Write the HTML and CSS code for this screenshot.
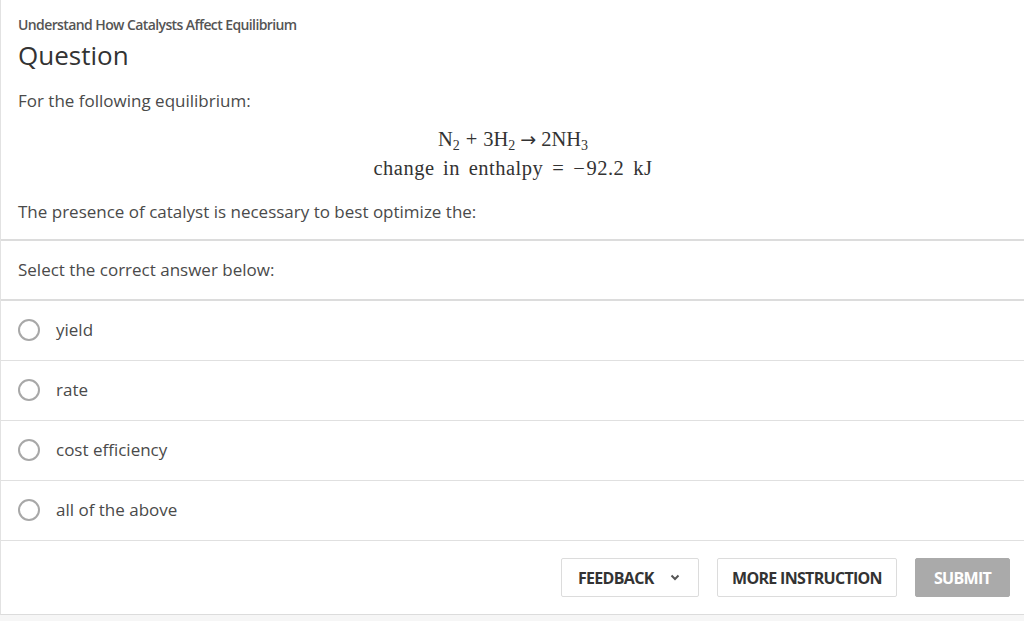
FILE: index.html
```html
<!DOCTYPE html>
<html>
<head>
<meta charset="utf-8">
<link rel="stylesheet" href="styles.css">
</head>
<body>
<div class="card">
  <div class="header">
    <div class="subtitle">Understand How Catalysts Affect Equilibrium</div>
    <h1 class="title">Question</h1>
    <p class="text intro">For the following equilibrium:</p>
    <div class="math">
      <div class="mline">N<sub>2</sub><span class="op">+</span>3H<sub>2</sub><span class="op arrow">→</span>2NH<sub>3</sub></div>
      <div class="mline wide">change in enthalpy<span class="op">=</span><span class="minus">−</span>92.2<span class="thin"></span>kJ</div>
    </div>
    <p class="text prompt">The presence of catalyst is necessary to best optimize the:</p>
  </div>
  <div class="select text">Select the correct answer below:</div>
  <ul class="options">
    <li class="option"><span class="radio"></span><span class="text">yield</span></li>
    <li class="option"><span class="radio"></span><span class="text">rate</span></li>
    <li class="option"><span class="radio"></span><span class="text">cost efficiency</span></li>
    <li class="option"><span class="radio"></span><span class="text">all of the above</span></li>
  </ul>
  <div class="footer">
    <button class="btn feedback">FEEDBACK
      <svg class="chev" width="10" height="7" viewBox="0 0 10 7"><path d="M1.5 1.5 L5 5 L8.5 1.5" fill="none" stroke="#555" stroke-width="2"/></svg>
    </button>
    <button class="btn more">MORE INSTRUCTION</button>
    <button class="btn submit">SUBMIT</button>
  </div>
</div>
</body>
</html>
```
FILE: styles.css
```css
html, body {
  margin: 0;
  padding: 0;
  background: #f6f6f6;
  font-family: "Open Sans", "Liberation Sans", sans-serif;
  color: #4a4a4a;
}
.card {
  background: #fff;
  border-left: 1px solid #e2e2e2;
  border-bottom: 1px solid #dcdcdc;
  height: 615px;
  box-sizing: border-box;
  display: flex;
  flex-direction: column;
}
.header {
  padding: 16px 18px 15px 17px;
  border-bottom: 2px solid #dcdcdc;
}
.subtitle {
  font-size: 14px;
  line-height: 18px;
  font-weight: 600;
  letter-spacing: -0.6px;
  color: #555;
}
.title {
  margin: 5px 0 0;
  font-size: 26px;
  line-height: 32px;
  font-weight: 400;
  color: #333;
}
.text {
  font-size: 17px;
  line-height: 24px;
  color: #4a4a4a;
}
.intro {
  margin: 18px 0 0;
}
.math {
  margin-top: 12px;
  text-align: center;
  font-family: "Liberation Serif", "DejaVu Serif", serif;
  font-size: 20.5px;
  line-height: 29px;
  color: #333;
  padding-left: 2px;
}
.math sub {
  font-size: 14px;
  vertical-align: -4px;
  line-height: 0;
}
.math .op {
  padding: 0 6px;
}
.math .arrow {
  font-family: "DejaVu Sans", sans-serif;
  font-size: 19px;
  padding: 0 5px;
}
.math .wide {
  letter-spacing: 0.5px;
  word-spacing: 3px;
}
.math .wide .op {
  padding: 0 9px;
}
.math .minus {
  padding-right: 1px;
}
.math .thin {
  display: inline-block;
  width: 9px;
}
.prompt {
  margin: 17px 0 0;
}
.select {
  padding: 17px 18px 17px 17px;
  border-bottom: 2px solid #dcdcdc;
}
.options {
  list-style: none;
  margin: 0;
  padding: 0;
}
.option {
  display: flex;
  align-items: center;
  padding: 17px 17px 18px 17px;
  border-bottom: 1px solid #e0e0e0;
}
.radio {
  width: 18px;
  height: 18px;
  border: 2px solid #a8a8a8;
  border-radius: 50%;
  margin-right: 16px;
  flex: none;
}
.footer {
  display: flex;
  justify-content: flex-end;
  gap: 18px;
  padding: 17px 14px 0 0;
}
.btn {
  height: 39px;
  box-sizing: border-box;
  padding: 0 16px;
  border: 1px solid #dcdcdc;
  background: #fff;
  border-radius: 2px;
  font-family: "Open Sans", "Liberation Sans", sans-serif;
  font-weight: 700;
  font-size: 16px;
  letter-spacing: -0.7px;
  color: #333;
  display: flex;
  align-items: center;
}
.feedback {
  width: 138px;
}
.more {
  width: 180px;
  justify-content: center;
  padding: 0;
}
.chev {
  margin-left: auto;
  margin-right: 2px;
}
.submit {
  background: #aaaaaa;
  border-color: #aaaaaa;
  color: #fff;
  width: 95px;
  justify-content: center;
  padding: 0;
}
```
